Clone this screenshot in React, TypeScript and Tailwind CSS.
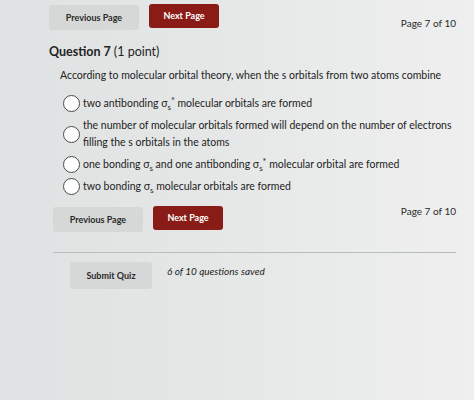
import React from 'react';

const font = { fontFamily: 'Lato, "Open Sans", sans-serif' };

const Sigma = ({ star }: { star?: boolean }) => (
  <span className="leading-none">
    σ<span className="relative top-[3px] text-[8px] leading-none">s</span>
    {star && <span className="relative -top-[3px] text-[9px] leading-none">*</span>}
  </span>
);

const Radio = () => (
  <span className="w-[17px] h-[17px] shrink-0 rounded-full border border-[#4a4a4a] bg-white" />
);

const NavRow = ({ bottom }: { bottom?: boolean }) => (
  <div className="flex items-center h-[27px]">
    <button className="w-[90px] h-[25px] rounded-[3px] bg-[#d6d7d7] text-[9px] font-bold text-[#2a2a2a]">
      Previous Page
    </button>
    <button className="ml-[10px] -mt-[4px] w-[70px] h-[24px] rounded-[3px] bg-[#8a1c17] text-[9px] font-bold text-white">
      Next Page
    </button>
    <span className={`ml-auto text-[10px] text-[#2a2a2a] ${bottom ? '-mt-[16px]' : 'mt-[12px]'}`}>
      Page 7 of 10
    </span>
  </div>
);

const options: React.ReactNode[] = [
  <>two antibonding <Sigma star /> molecular orbitals are formed</>,
  <>the number of molecular orbitals formed will depend on the number of electrons<br />filling the s orbitals in the atoms</>,
  <>one bonding <Sigma /> and one antibonding <Sigma star /> molecular orbital are formed</>,
  <>two bonding <Sigma /> molecular orbitals are formed</>,
];

export default function App() {
  return (
    <div
      style={font}
      className="w-[474px] h-[400px] overflow-hidden bg-gradient-to-r from-[#dfe2e2] via-[#e6e8e8] to-[#efefef] text-[#232323]"
    >
      <div className="pl-[49px] pr-[18px] pt-[4px]">
        <NavRow />

        <h2 className="mt-[12px] text-[12.5px] leading-[18px] font-bold">
          Question 7 <span className="font-normal">(1 point)</span>
        </h2>
        <p className="mt-[7px] ml-[11px] text-[10.5px] leading-[15px]">
          According to molecular orbital theory, when the s orbitals from two atoms combine
        </p>

        <ul className="mt-[12px] ml-[14px] flex flex-col gap-[5px]">
          {options.map((opt, i) => (
            <li key={i} className="flex items-center gap-[3px] text-[10.5px] leading-[17px] whitespace-nowrap">
              <Radio />
              <span>{opt}</span>
            </li>
          ))}
        </ul>

        <div className="mt-[11px] pl-[4px]">
          <NavRow bottom />
        </div>

        <hr className="mt-[19px] ml-[4px] border-t border-[#b9bcbc]" />

        <div className="mt-[9px] ml-[21px] flex items-center gap-[15px]">
          <button className="w-[82px] h-[27px] rounded-[3px] bg-[#d6d7d7] text-[9px] font-bold text-[#2a2a2a]">
            Submit Quiz
          </button>
          <span className="-mt-[8px] text-[10px] italic">6 of 10 questions saved</span>
        </div>
      </div>
    </div>
  );
}
